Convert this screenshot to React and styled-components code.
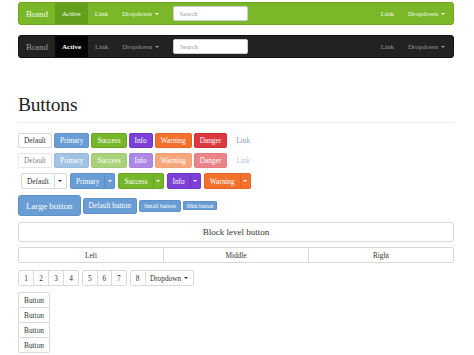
import React from "react";
import styled, { createGlobalStyle, css } from "styled-components";

const Global = createGlobalStyle`
  html, body { margin: 0; padding: 0; background: #fff; }
  body { font-family: "Liberation Serif", "Times New Roman", serif; color: #333; }
  * { box-sizing: border-box; }
`;

const Page = styled.div`
  width: 474px;
  padding: 2px 20px 0 18px;
  display: flex;
  flex-direction: column;
`;

const navThemes = {
  green: { bg: "#7ab82a", border: "#6ea624", active: "#64a01c", text: "#f4f9ec", brand: "#f4f9ec", activeText: "#fff" },
  dark: { bg: "#222", border: "#111", active: "#050505", text: "#9a9a9a", brand: "#9a9a9a", activeText: "#fff" },
};

const Navbar = styled.nav`
  height: 23px;
  border-radius: 3px;
  display: flex;
  align-items: stretch;
  padding-right: 1px;
  background: ${(p) => navThemes[p.$v].bg};
  border: 1px solid ${(p) => navThemes[p.$v].border};
  margin-bottom: ${(p) => p.$mb || 0}px;
`;

const Brand = styled.span`
  display: flex;
  align-items: center;
  padding: 0 7px 0 7px;
  font-size: 9px;
  color: ${(p) => navThemes[p.$v].brand};
`;

const NavItem = styled.span`
  display: flex;
  align-items: center;
  padding: 0 7px;
  font-size: 7px;
  color: ${(p) => (p.$active ? navThemes[p.$v].activeText : navThemes[p.$v].text)};
  background: ${(p) => (p.$active ? navThemes[p.$v].active : "transparent")};
  font-weight: ${(p) => (p.$active && p.$v === "dark" ? 700 : 400)};
`;

const Caret = styled.span`
  display: inline-block;
  width: 0;
  height: 0;
  margin-left: ${(p) => p.$ml ?? 3}px;
  border-left: 2px solid transparent;
  border-right: 2px solid transparent;
  border-top: 2px solid ${(p) => p.$c || "currentColor"};
`;

const Search = styled.div`
  align-self: center;
  margin-left: 7px;
  width: 75px;
  height: 15px;
  border-radius: 2px;
  background: #fff;
  border: 1px solid #ccc;
  font-size: 6.5px;
  color: #999;
  display: flex;
  align-items: center;
  padding-left: 6px;
`;

const Spacer = styled.span`
  flex: 1;
`;

const Heading = styled.h1`
  margin: 35px 0 10px;
  padding-bottom: 6px;
  border-bottom: 1px solid #eee;
  font-size: 19.5px;
  font-weight: 400;
  line-height: 23px;
  color: #222;
  letter-spacing: -0.2px;
`;

const variants = {
  default: { bg: "#fff", bd: "#d9d9d9", fg: "#333", sep: "#d9d9d9" },
  primary: { bg: "#6a9dd3", bd: "#5f92c9", fg: "#fff", sep: "#5a8cc3" },
  success: { bg: "#76b72a", bd: "#6aa824", fg: "#fff", sep: "#66a020" },
  info: { bg: "#7d40d6", bd: "#7136c8", fg: "#fff", sep: "#6c33c0" },
  warning: { bg: "#f4712d", bd: "#e86526", fg: "#fff", sep: "#e26022" },
  danger: { bg: "#dc3a40", bd: "#cf3037", fg: "#fff", sep: "#c92d34" },
};

const sizes = {
  lg: { h: 21, px: 7, fs: 9.1, r: 3 },
  md: { h: 15, px: 5, fs: 7.3, r: 2 },
  md16: { h: 16, px: 5, fs: 7.3, r: 2 },
  sm: { h: 12, px: 4, fs: 6.2, r: 2 },
  xs: { h: 9, px: 3, fs: 5.6, r: 1 },
};

const Btn = styled.span`
  display: inline-flex;
  align-items: center;
  justify-content: center;
  white-space: nowrap;
  height: ${(p) => sizes[p.$s || "md"].h}px;
  padding: 0 ${(p) => (p.$px ?? sizes[p.$s || "md"].px)}px;
  font-size: ${(p) => sizes[p.$s || "md"].fs}px;
  border-radius: ${(p) => sizes[p.$s || "md"].r}px;
  background: ${(p) => variants[p.$v || "default"].bg};
  border: 1px solid ${(p) => variants[p.$v || "default"].bd};
  color: ${(p) => variants[p.$v || "default"].fg};
  opacity: ${(p) => (p.$disabled ? 0.62 : 1)};
  ${(p) => p.$w && css`width: ${p.$w}px;`}
  ${(p) => p.$flex && css`flex: 1;`}
`;

const LinkBtn = styled.span`
  display: inline-flex;
  align-items: center;
  height: 15px;
  padding: 0 7px;
  font-size: 7.3px;
  color: #7f9ccc;
  opacity: ${(p) => (p.$disabled ? 0.6 : 1)};
`;

const Row = styled.div`
  display: flex;
  align-items: ${(p) => p.$align || "flex-start"};
  gap: ${(p) => p.$gap ?? 2}px;
  margin-top: ${(p) => p.$mt ?? 0}px;
  padding-left: ${(p) => p.$pl ?? 0}px;
`;

const Group = styled.div`
  display: flex;
  ${(p) => p.$flex && css`width: 100%;`}
  & > ${Btn} {
    border-radius: 0;
  }
  & > ${Btn}:not(:first-child) {
    margin-left: -1px;
  }
  & > ${Btn}:first-child {
    border-top-left-radius: 2px;
    border-bottom-left-radius: 2px;
  }
  & > ${Btn}:last-child {
    border-top-right-radius: 2px;
    border-bottom-right-radius: 2px;
  }
`;

const SplitCaret = styled(Btn)`
  && {
    margin-left: 0;
    border-left-color: ${(p) => variants[p.$v || "default"].sep};
  }
`;

const VGroup = styled.div`
  display: flex;
  flex-direction: column;
  width: 32px;
  margin-top: 6px;
  & > ${Btn} {
    border-radius: 0;
    height: 16px;
  }
  & > ${Btn}:not(:first-child) {
    margin-top: -1px;
  }
  & > ${Btn}:first-child {
    border-top-left-radius: 2px;
    border-top-right-radius: 2px;
  }
  & > ${Btn}:last-child {
    border-bottom-left-radius: 2px;
    border-bottom-right-radius: 2px;
  }
`;

const BlockBtn = styled(Btn)`
  && {
    width: 100%;
    height: 20px;
    font-size: 9px;
    border-radius: 3px;
  }
`;

const names = ["Default", "Primary", "Success", "Info", "Warning", "Danger"];
const keys = ["default", "primary", "success", "info", "warning", "danger"];

function NavBar({ v, mb }) {
  return (
    <Navbar $v={v} $mb={mb}>
      <Brand $v={v}>Brand</Brand>
      <NavItem $v={v} $active>Active</NavItem>
      <NavItem $v={v}>Link</NavItem>
      <NavItem $v={v}>
        Dropdown<Caret />
      </NavItem>
      <Search>Search</Search>
      <Spacer />
      <NavItem $v={v}>Link</NavItem>
      <NavItem $v={v}>
        Dropdown<Caret />
      </NavItem>
    </Navbar>
  );
}

export default function App() {
  return (
    <>
      <Global />
      <Page>
        <NavBar v="green" mb={10} />
        <NavBar v="dark" />
        <Heading>Buttons</Heading>

        <Row>
          {names.map((n, i) => (
            <Btn key={n} $v={keys[i]}>{n}</Btn>
          ))}
          <LinkBtn>Link</LinkBtn>
        </Row>
        <Row $mt={5}>
          {names.map((n, i) => (
            <Btn key={n} $v={keys[i]} $disabled>{n}</Btn>
          ))}
          <LinkBtn $disabled>Link</LinkBtn>
        </Row>
        <Row $mt={5} $gap={3} $pl={3}>
          {names.slice(0, 5).map((n, i) => (
            <Group key={n}>
              <Btn $v={keys[i]} $s="md16">{n}</Btn>
              <SplitCaret $v={keys[i]} $s="md16" $px={0} $w={keys[i] === "default" ? 13 : 11}>
                <Caret $ml={0} $c={keys[i] === "default" ? "#333" : "#fff"} />
              </SplitCaret>
            </Group>
          ))}
        </Row>
        <Row $mt={6} $align="center">
          <Btn $v="primary" $s="lg">Large button</Btn>
          <Btn $v="primary" $s="md16">Default button</Btn>
          <Btn $v="primary" $s="sm">Small button</Btn>
          <Btn $v="primary" $s="xs">Mini button</Btn>
        </Row>
        <Row $mt={6}>
          <BlockBtn>Block level button</BlockBtn>
        </Row>
        <Row $mt={5}>
          <Group $flex>
            <Btn $s="md16" $flex>Left</Btn>
            <Btn $s="md16" $flex>Middle</Btn>
            <Btn $s="md16" $flex>Right</Btn>
          </Group>
        </Row>
        <Row $mt={7} $gap={3}>
          <Group>
            {["1", "2", "3", "4"].map((n) => (
              <Btn key={n} $s="md16" $w={16} $px={0}>{n}</Btn>
            ))}
          </Group>
          <Group>
            {["5", "6", "7"].map((n) => (
              <Btn key={n} $s="md16" $w={15.5} $px={0}>{n}</Btn>
            ))}
          </Group>
          <Group>
            <Btn $s="md16" $w={16} $px={0}>8</Btn>
            <Btn $s="md16" $w={49} $px={0}>
              Dropdown<Caret $c="#333" />
            </Btn>
          </Group>
        </Row>
        <VGroup>
          <Btn>Button</Btn>
          <Btn>Button</Btn>
          <Btn>Button</Btn>
          <Btn>Button</Btn>
        </VGroup>
      </Page>
    </>
  );
}
